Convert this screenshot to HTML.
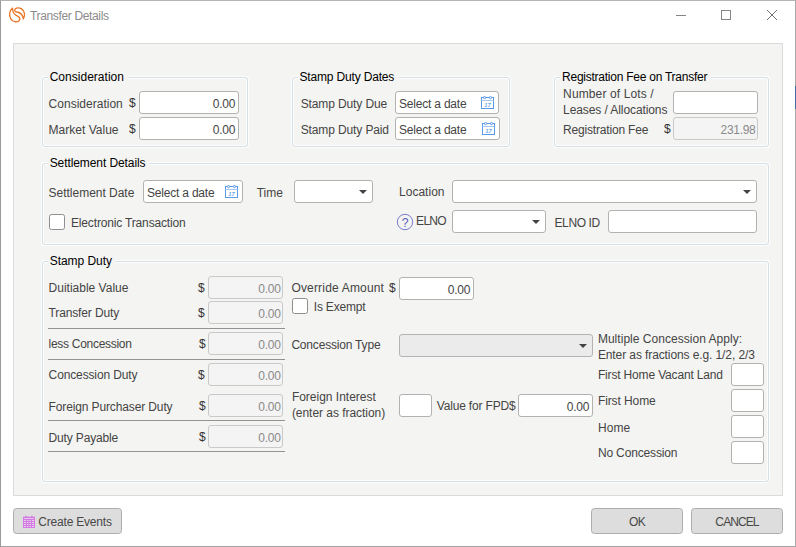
<!DOCTYPE html>
<html><head><meta charset="utf-8"><title>Transfer Details</title>
<style>
*{box-sizing:border-box;margin:0;padding:0}
html,body{width:796px;height:547px;overflow:hidden;background:#fff}
body{position:relative;font-family:"Liberation Sans",sans-serif;font-size:12px;color:#333;line-height:14px}
.a{position:absolute;white-space:nowrap}
.win{left:0;top:0;width:796px;height:547px;border-left:1px solid #9a9a9a;border-top:1px solid #b4b4b4;border-right:1px solid #a8a8a8;border-bottom:1px solid #a2a2a2;background:#fff}
.panel{left:13px;top:43px;width:770px;height:453px;background:#f4f4f2;border:1px solid #dadada}
.gb{border:1px solid #d5dfe5;border-radius:3px;box-shadow:0 0 0 1px #fdfdfd,inset 0 0 0 1px #fdfdfd}
.lg{background:#f4f4f2;color:#000;padding:0 4px 0 2px;font-size:12px}
.in{background:#fff;border:1px solid #b2b2b1;border-radius:3px;height:23px;text-align:right;padding:5px 3px 0 0;color:#444;letter-spacing:-0.3px}
.dis{background:#f4f4f4;border-color:#c9c9c9;color:#8a8a8a;padding-right:1.5px}
.l{text-align:left;padding-left:3px;letter-spacing:-0.2px}
.hr{height:1px;background:#929292;left:48px;width:237px}
.arr{width:0;height:0;border-left:4px solid transparent;border-right:4px solid transparent;border-top:4px solid #444}
.cb{width:16px;height:16px;background:#fff;border:1px solid #8e8e8e;border-radius:2.5px}
.btn{background:#dddddd;border:1px solid #adadad;border-radius:3.5px;height:26px;text-align:center;color:#484848;font-size:12px;padding-top:6px}
.t{color:#444}
</style></head><body>
<div class="a win"></div>
<!-- title -->
<svg class="a" style="left:9px;top:7px;overflow:visible" width="16" height="16" viewBox="0 0 16 16"><g fill="none" stroke="#eb7526" stroke-width="1.300" stroke-linejoin="round"><path d="M3.600 1.100C0.500 3.600-0.500 8.500 1.800 11.900C3.800 14.900 8 15.800 10 13.700C11.800 11.800 10.600 10 8.600 9.100C5.600 7.800 3.300 5.600 3.600 1.100Z"/><path d="M14.300 11.900C16.500 8.600 15.800 4 12.500 1.900C10 0.300 6.500 0.600 5.800 2.800C5.300 4.400 6.600 4.900 8 5C11 5.400 13.700 7.400 14.300 11.900Z"/></g></svg>
<div class="a" style="left:30px;top:9px;color:#8b8b8b;font-size:12px;letter-spacing:-0.35px">Transfer Details</div>
<div class="a" style="left:676px;top:15px;width:10px;height:1px;background:#858585"></div>
<div class="a" style="left:721px;top:10px;width:10px;height:10px;border:1px solid #858585"></div>
<svg class="a" style="left:766px;top:9px" width="12" height="12" viewBox="0 0 12 12"><path d="M1 1L11 11M11 1L1 11" stroke="#707070" stroke-width="1"/></svg>

<div class="a" style="left:795px;top:86px;width:1px;height:23px;background:#3f6ea6"></div>
<div class="a panel"></div>

<!-- Consideration -->
<div class="a gb" style="left:42px;top:77px;width:206px;height:70px"></div>
<div class="a lg" style="left:47.7px;top:70px;letter-spacing:0.02px">Consideration</div>
<div class="a t" style="left:48.6px;top:97px;letter-spacing:0.01px">Consideration</div>
<div class="a" style="left:129px;top:96px">$</div>
<div class="a in" style="left:139px;top:91px;width:100px">0.00</div>
<div class="a t" style="left:48.6px;top:123px;letter-spacing:0.01px">Market Value</div>
<div class="a" style="left:129px;top:122px">$</div>
<div class="a in" style="left:139px;top:117px;width:100px">0.00</div>

<!-- Stamp Duty Dates -->
<div class="a gb" style="left:292px;top:77px;width:218px;height:70px"></div>
<div class="a lg" style="left:297.5px;top:70px;letter-spacing:-0.17px">Stamp Duty Dates</div>
<div class="a t" style="left:300.7px;top:97px;letter-spacing:-0.12px">Stamp Duty Due</div>
<div class="a in l" style="left:395px;top:91px;width:104px">Select a date</div>
<svg class="a" style="left:480px;top:95px" width="15" height="14" viewBox="0 0 15 14"><g fill="none" stroke="#5b9ae6" stroke-width="1"><rect x="1.500" y="2.500" width="12" height="11"/><path d="M1.500 5.500H13.500" stroke="#a9c8f1"/><circle cx="4.500" cy="2.600" r="1.100" fill="#fff"/><circle cx="10.500" cy="2.600" r="1.100" fill="#fff"/></g><text x="7.600" y="11.500" font-family="Liberation Sans, sans-serif" font-size="5.800" font-style="italic" font-weight="bold" fill="#6ea6ea" text-anchor="middle">17</text></svg>
<div class="a t" style="left:300.7px;top:123px;letter-spacing:-0.12px">Stamp Duty Paid</div>
<div class="a in l" style="left:395px;top:117px;width:105px">Select a date</div>
<svg class="a" style="left:481px;top:121px" width="15" height="14" viewBox="0 0 15 14"><g fill="none" stroke="#5b9ae6" stroke-width="1"><rect x="1.500" y="2.500" width="12" height="11"/><path d="M1.500 5.500H13.500" stroke="#a9c8f1"/><circle cx="4.500" cy="2.600" r="1.100" fill="#fff"/><circle cx="10.500" cy="2.600" r="1.100" fill="#fff"/></g><text x="7.600" y="11.500" font-family="Liberation Sans, sans-serif" font-size="5.800" font-style="italic" font-weight="bold" fill="#6ea6ea" text-anchor="middle">17</text></svg>

<!-- Registration Fee -->
<div class="a gb" style="left:554px;top:77px;width:215px;height:70px"></div>
<div class="a lg" style="left:560.1px;top:70px;letter-spacing:-0.25px">Registration Fee on Transfer</div>
<div class="a t" style="left:563.1px;top:87px;letter-spacing:0.12px">Number of Lots /</div>
<div class="a t" style="left:563.1px;top:102.5px;letter-spacing:-0.09px">Leases / Allocations</div>
<div class="a in" style="left:673px;top:91px;width:85px"></div>
<div class="a t" style="left:563.1px;top:123px;letter-spacing:-0.18px">Registration Fee</div>
<div class="a" style="left:664px;top:122px">$</div>
<div class="a in dis" style="left:673px;top:117px;width:85px">231.98</div>

<!-- Settlement -->
<div class="a gb" style="left:42px;top:163px;width:727px;height:82px"></div>
<div class="a lg" style="left:47.7px;top:156px;letter-spacing:-0.09px">Settlement Details</div>
<div class="a t" style="left:48.6px;top:186px;letter-spacing:-0.02px">Settlement Date</div>
<div class="a in l" style="left:143px;top:180px;width:100px">Select a date</div>
<svg class="a" style="left:224px;top:184px" width="15" height="14" viewBox="0 0 15 14"><g fill="none" stroke="#5b9ae6" stroke-width="1"><rect x="1.500" y="2.500" width="12" height="11"/><path d="M1.500 5.500H13.500" stroke="#a9c8f1"/><circle cx="4.500" cy="2.600" r="1.100" fill="#fff"/><circle cx="10.500" cy="2.600" r="1.100" fill="#fff"/></g><text x="7.600" y="11.500" font-family="Liberation Sans, sans-serif" font-size="5.800" font-style="italic" font-weight="bold" fill="#6ea6ea" text-anchor="middle">17</text></svg>
<div class="a t" style="left:256.7px;top:186px;letter-spacing:0.04px">Time</div>
<div class="a in" style="left:294px;top:180px;width:79px"></div>
<div class="a arr" style="left:359px;top:190px"></div>
<div class="a t" style="left:399.0px;top:185px;letter-spacing:0.02px">Location</div>
<div class="a in" style="left:452px;top:180px;width:305px"></div>
<div class="a arr" style="left:743px;top:190px"></div>
<div class="a cb" style="left:49px;top:214px"></div>
<div class="a t" style="left:71.0px;top:216px;letter-spacing:-0.16px">Electronic Transaction</div>
<svg class="a" style="left:396px;top:213px" width="18" height="18" viewBox="0 0 18 18"><circle cx="9" cy="9" r="7.700" fill="none" stroke="#6a6ec8" stroke-width="0.900"/><text x="9.200" y="13.600" font-family="Liberation Sans, sans-serif" font-size="12.300" fill="#5c60c0" text-anchor="middle">?</text></svg>
<div class="a t" style="left:416.1px;top:214px;letter-spacing:-0.70px">ELNO</div>
<div class="a in" style="left:452px;top:210px;width:94px"></div>
<div class="a arr" style="left:532px;top:220px"></div>
<div class="a t" style="left:554.5px;top:216px;letter-spacing:-0.40px">ELNO ID</div>
<div class="a in" style="left:608px;top:210px;width:149px"></div>

<!-- Stamp Duty -->
<div class="a gb" style="left:42px;top:261px;width:727px;height:221px"></div>
<div class="a lg" style="left:47.7px;top:254px;letter-spacing:-0.04px">Stamp Duty</div>

<div class="a t" style="left:48.6px;top:281px;letter-spacing:0.00px">Duitiable Value</div>
<div class="a" style="left:198px;top:281px">$</div>
<div class="a in dis" style="left:208px;top:276px;width:75px">0.00</div>
<div class="a t" style="left:48.6px;top:306px;letter-spacing:-0.14px">Transfer Duty</div>
<div class="a" style="left:198px;top:306px">$</div>
<div class="a in dis" style="left:208px;top:301px;width:75px">0.00</div>
<div class="a hr" style="top:328px"></div>
<div class="a t" style="left:48.6px;top:337px;letter-spacing:-0.29px">less Concession</div>
<div class="a" style="left:199px;top:337px">$</div>
<div class="a in dis" style="left:208px;top:332px;width:75px">0.00</div>
<div class="a hr" style="top:359px"></div>
<div class="a t" style="left:48.6px;top:368px;letter-spacing:-0.13px">Concession Duty</div>
<div class="a" style="left:198px;top:368px">$</div>
<div class="a in dis" style="left:208px;top:363px;width:75px">0.00</div>
<div class="a t" style="left:48.6px;top:400px;letter-spacing:-0.13px">Foreign Purchaser Duty</div>
<div class="a" style="left:199px;top:399px">$</div>
<div class="a in dis" style="left:208px;top:394px;width:75px">0.00</div>
<div class="a hr" style="top:420px"></div>
<div class="a t" style="left:48.6px;top:431px;letter-spacing:-0.16px">Duty Payable</div>
<div class="a" style="left:199px;top:430px">$</div>
<div class="a in dis" style="left:208px;top:425px;width:75px">0.00</div>
<div class="a hr" style="top:451px"></div>

<div class="a t" style="left:291.4px;top:281px;letter-spacing:0.18px">Override Amount</div>
<div class="a" style="left:389px;top:281px">$</div>
<div class="a in" style="left:399px;top:277px;width:75px">0.00</div>
<div class="a cb" style="left:292px;top:298px"></div>
<div class="a t" style="left:313.8px;top:300px;letter-spacing:-0.21px">Is Exempt</div>
<div class="a t" style="left:291.4px;top:338px;letter-spacing:-0.19px">Concession Type</div>
<div class="a in" style="left:399px;top:334px;width:194px;background:#ebebeb;border-color:#b4b4b4"></div>
<div class="a arr" style="left:579px;top:344px"></div>
<div class="a t" style="left:291.9px;top:390px;letter-spacing:-0.01px">Foreign Interest</div>
<div class="a t" style="left:291.9px;top:406px;letter-spacing:-0.04px">(enter as fraction)</div>
<div class="a in" style="left:399px;top:394px;width:33px"></div>
<div class="a t" style="left:436.7px;top:399px;letter-spacing:-0.16px">Value for FPD$</div>
<div class="a in" style="left:518px;top:394px;width:75px">0.00</div>

<div class="a t" style="left:597.9px;top:332px;letter-spacing:0.03px">Multiple Concession Apply:</div>
<div class="a t" style="left:597.9px;top:348px;letter-spacing:-0.10px">Enter as fractions e.g. 1/2, 2/3</div>
<div class="a t" style="left:597.9px;top:368px;letter-spacing:-0.16px">First Home Vacant Land</div>
<div class="a in" style="left:731px;top:363px;width:33px"></div>
<div class="a t" style="left:597.9px;top:394px;letter-spacing:-0.09px">First Home</div>
<div class="a in" style="left:731px;top:389px;width:33px"></div>
<div class="a t" style="left:597.9px;top:421px;letter-spacing:0.10px">Home</div>
<div class="a in" style="left:731px;top:415px;width:33px"></div>
<div class="a t" style="left:597.9px;top:446px;letter-spacing:-0.15px">No Concession</div>
<div class="a in" style="left:731px;top:441px;width:33px"></div>

<!-- buttons -->
<div class="a btn" style="left:13px;top:508px;width:109px;text-align:left;padding-left:24.3px;letter-spacing:-0.2px">Create Events</div>
<svg class="a" style="left:22px;top:515px" width="14" height="14" viewBox="0 0 14 14"><rect x="1" y="1.700" width="12" height="11.300" fill="#d57ae4"/><rect x="3" y="0.900" width="1.800" height="1" fill="#d57ae4"/><rect x="9" y="0.900" width="1.800" height="1" fill="#d57ae4"/><g fill="#e6d0ec"><rect x="2" y="3" width="10" height="0.900"/><rect x="2" y="5" width="2" height="1"/><rect x="5" y="5" width="1.5" height="1"/><rect x="7.5" y="5" width="1.5" height="1"/><rect x="10" y="5" width="2" height="1"/><rect x="2" y="7" width="2" height="1"/><rect x="5" y="7" width="1.5" height="1"/><rect x="7.5" y="7" width="1.5" height="1"/><rect x="10" y="7" width="2" height="1"/><rect x="2" y="9" width="2" height="1"/><rect x="5" y="9" width="1.5" height="1"/><rect x="7.5" y="9" width="1.5" height="1"/><rect x="10" y="9" width="2" height="1"/><rect x="2" y="11" width="2" height="1"/><rect x="5" y="11" width="1.5" height="1"/><rect x="7.5" y="11" width="1.5" height="1"/><rect x="10" y="11" width="2" height="1"/></g></svg>
<div class="a btn" style="left:591px;top:508px;width:92px;letter-spacing:-0.6px">OK</div>
<div class="a btn" style="left:691px;top:508px;width:92px;letter-spacing:-0.9px">CANCEL</div>
</body></html>
